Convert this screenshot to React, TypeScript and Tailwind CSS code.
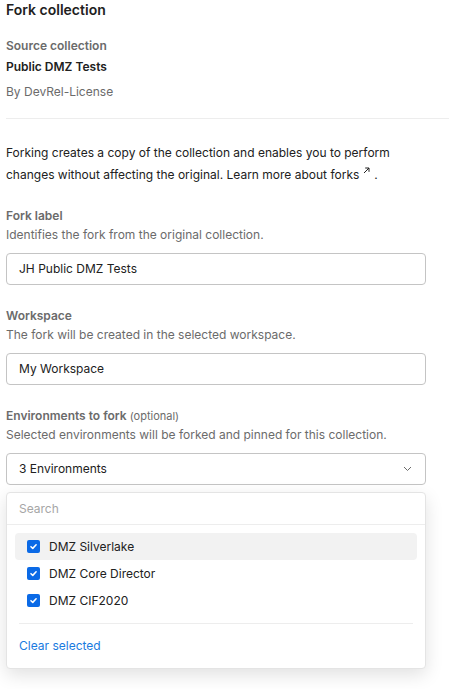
import React from 'react';

const envs = ['DMZ Silverlake', 'DMZ Core Director', 'DMZ CIF2020'];

const Field: React.FC<{ label: React.ReactNode; hint: string; children: React.ReactNode }> = ({ label, hint, children }) => (
  <div className="flex flex-col">
    <div className="text-[12px] leading-[16px] font-semibold text-[#6b6b6b]">{label}</div>
    <div className="mt-[3px] text-[12px] leading-[16px] text-[#6b6b6b]">{hint}</div>
    <div className="mt-[10px]">{children}</div>
  </div>
);

const Check: React.FC = () => (
  <span className="flex h-[13px] w-[13px] items-center justify-center rounded-[2px] bg-[#0b6ae6]">
    <svg width="9" height="9" viewBox="0 0 10 10" fill="none">
      <path d="M2.2 5.2 4.2 7.1 7.9 3.1" stroke="white" strokeWidth="1.7" strokeLinecap="round" strokeLinejoin="round" />
    </svg>
  </span>
);

export default function App() {
  return (
    <div className="h-[689px] w-[449px] overflow-hidden bg-white pl-[6px] font-['Inter',sans-serif] text-[#212121]">
      {/* Header */}
      <h1 className="text-[14px] leading-[20px] font-semibold text-[#212121]">Fork collection</h1>

      {/* Source */}
      <div className="mt-[18px] text-[12px] leading-[16px] font-semibold text-[#6b6b6b]">Source collection</div>
      <div className="mt-[5px] text-[12px] leading-[16px] font-semibold text-[#212121]">Public DMZ Tests</div>
      <div className="mt-[9px] text-[12px] leading-[16px] text-[#6b6b6b]">By DevRel-License</div>
      <div className="mt-[18px] h-px bg-[#ededed]" />

      {/* Intro */}
      <p className="mt-[23px] w-[410px] text-[12px] leading-[22px] text-[#212121]">
        Forking creates a copy of the collection and enables you to perform changes without affecting the original.
        Learn more about forks
        <span className="ml-[4px] inline-block h-[7px] w-[7px] align-[5px]">
          <svg className="block" width="7" height="7" viewBox="0 0 7 7" fill="none">
            <path d="M1 6 6 1M2.2 1H6v3.8" stroke="#212121" strokeWidth="1" />
          </svg>
        </span>
        <span className="ml-[4px]">.</span>
      </p>

      <div className="mt-[22px] flex w-[420px] flex-col gap-[23px]">
        <Field label="Fork label" hint="Identifies the fork from the original collection.">
          <div className="flex h-[32px] items-center rounded-[4px] border border-[#c4c4c4] px-[12px] text-[12px] text-[#212121]">
            JH Public DMZ Tests
          </div>
        </Field>

        <Field label="Workspace" hint="The fork will be created in the selected workspace.">
          <div className="flex h-[32px] items-center rounded-[4px] border border-[#c4c4c4] px-[12px] text-[12px] text-[#212121]">
            My Workspace
          </div>
        </Field>

        <Field
          label={
            <>
              Environments to fork <span className="text-[11px] font-normal">(optional)</span>
            </>
          }
          hint="Selected environments will be forked and pinned for this collection."
        >
          <div className="relative">
            <div className="flex h-[32px] items-center justify-between rounded-[4px] border border-[#c4c4c4] pl-[12px] pr-[13px] text-[12px] text-[#212121]">
              <span>3 Environments</span>
              <svg width="9" height="6" viewBox="0 0 9 6" fill="none">
                <path d="M1 1 4.5 4.5 8 1" stroke="#6b6b6b" strokeWidth="1" />
              </svg>
            </div>

            {/* Dropdown */}
            <div className="mt-[7px] rounded-[4px] border border-[#e4e4e4] bg-white shadow-[0_6px_18px_rgba(0,0,0,0.12)]">
              <div className="flex h-[32px] items-center border-b border-[#ededed] px-[12px] text-[12px] text-[#a6a6a6]">
                Search
              </div>
              <div className="px-[8px] pt-[8px]">
                {envs.map((e, i) => (
                  <div
                    key={e}
                    className={`flex h-[27px] items-center gap-[9px] rounded-[4px] px-[12px] text-[12px] text-[#212121] ${i === 0 ? 'bg-[#f2f2f2]' : ''}`}
                  >
                    <Check />
                    <span>{e}</span>
                  </div>
                ))}
              </div>
              <div className="mx-[12px] mt-[9px] h-px bg-[#ededed]" />
              <div className="px-[12px] pt-[14px] pb-[14px] text-[12px] leading-[16px] text-[#1a7be0]">Clear selected</div>
            </div>
          </div>
        </Field>
      </div>
    </div>
  );
}
